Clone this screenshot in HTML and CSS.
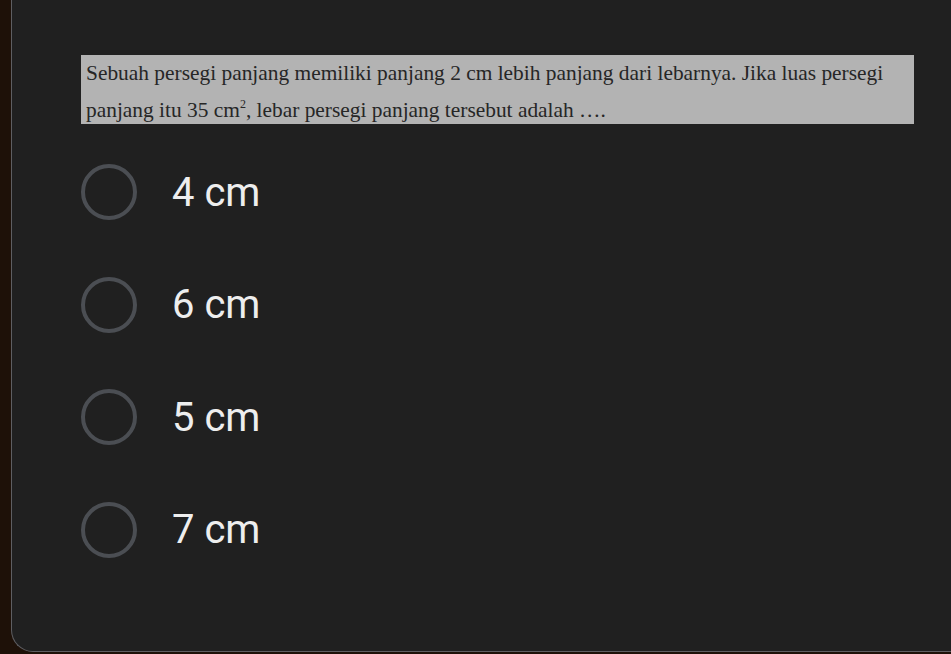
FILE: index.html
```html
<!DOCTYPE html>
<html>
<head>
<meta charset="utf-8">
<link rel="stylesheet" href="styles.css">
</head>
<body>
<div class="card">
  <div class="question">Sebuah persegi panjang memiliki panjang 2 cm lebih panjang dari lebarnya. Jika luas persegi<br>panjang itu 35 cm<sup>2</sup>, lebar persegi panjang tersebut adalah ….</div>
  <div class="options">
    <div class="option"><span class="radio"></span><span class="label">4 cm</span></div>
    <div class="option"><span class="radio"></span><span class="label">6 cm</span></div>
    <div class="option"><span class="radio"></span><span class="label">5 cm</span></div>
    <div class="option"><span class="radio"></span><span class="label">7 cm</span></div>
  </div>
</div>
</body>
</html>
```
FILE: styles.css
```css
html, body {
  margin: 0;
  padding: 0;
  background: #1e1108;
  overflow: hidden;
}
.card {
  margin-left: 11px;
  height: 652px;
  background: #202020;
  border-left: 1px solid #5e5e62;
  border-bottom: 1px solid #5e5e62;
  border-bottom-left-radius: 22px;
  padding: 55px 37px 0 69px;
  box-sizing: border-box;
}
.question {
  background: #b3b3b3;
  color: #262626;
  font-family: "Liberation Serif", "Times New Roman", serif;
  font-size: 21.4px;
  line-height: 37px;
  padding: 0 5px;
  height: 69px;
  box-sizing: border-box;
  white-space: nowrap;
  overflow: hidden;
}
.question sup {
  font-size: 12px;
  line-height: 1;
  vertical-align: 9px;
}
.options {
  display: flex;
  flex-direction: column;
  gap: 56.6px;
  margin-top: 40px;
}
.option {
  display: flex;
  align-items: center;
  height: 56px;
}
.radio {
  width: 56px;
  height: 56px;
  box-sizing: border-box;
  border: 4px solid #4b4e53;
  border-radius: 50%;
  flex: none;
}
.label {
  margin-left: 35px;
  font-family: Roboto, "Liberation Sans", sans-serif;
  font-size: 40px;
  color: #eeeeee;
}
```
